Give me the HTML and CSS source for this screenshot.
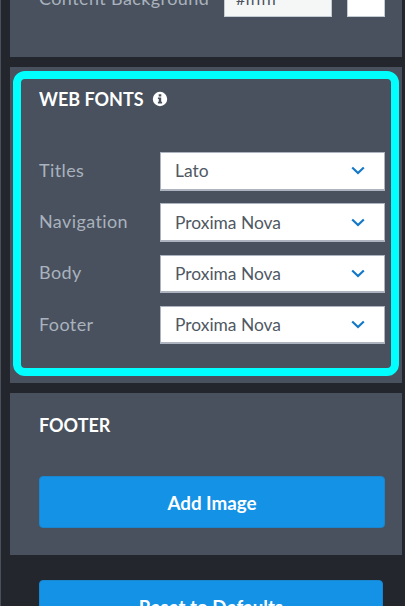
FILE: index.html
```html
<!DOCTYPE html>
<html lang="en">
<head>
    <meta charset="UTF-8">
    <meta name="viewport" content="width=device-width, initial-scale=1.0">
    <title>Theme Settings</title>
    <link rel="stylesheet" href="styles.css">
</head>
<body>
    <div class="sidebar">
        <!-- Colors section, scrolled mostly out of view -->
        <section class="panel panel-colors">
            <div class="color-row">
                <span class="field-label">Content Background</span>
                <input class="hex-input" type="text" value="#ffffff">
                <span class="swatch"></span>
            </div>
        </section>

        <!-- Web fonts section -->
        <section class="panel panel-fonts">
            <div class="highlight">
                <h2 class="panel-title">WEB FONTS
                    <svg class="info-icon" viewBox="0 0 16 16" aria-hidden="true">
                        <path fill-rule="evenodd" d="M8 .8a7.2 7.2 0 1 1 0 14.4A7.2 7.2 0 0 1 8 .8zM6.7 3.2v2.3h2.6V3.2zM5.9 6.5v1.6h.9v2.7h-.9v1.7h4.2v-1.7h-.9V6.5z"/>
                    </svg>
                </h2>
                <div class="font-row">
                    <span class="field-label">Titles</span>
                    <div class="select-box">Lato
                        <svg class="chevron" viewBox="0 0 14 9" aria-hidden="true"><path d="M1.2 1.5 7 7l5.8-5.5"/></svg>
                    </div>
                </div>
                <div class="font-row">
                    <span class="field-label">Navigation</span>
                    <div class="select-box">Proxima Nova
                        <svg class="chevron" viewBox="0 0 14 9" aria-hidden="true"><path d="M1.2 1.5 7 7l5.8-5.5"/></svg>
                    </div>
                </div>
                <div class="font-row">
                    <span class="field-label">Body</span>
                    <div class="select-box">Proxima Nova
                        <svg class="chevron" viewBox="0 0 14 9" aria-hidden="true"><path d="M1.2 1.5 7 7l5.8-5.5"/></svg>
                    </div>
                </div>
                <div class="font-row">
                    <span class="field-label">Footer</span>
                    <div class="select-box">Proxima Nova
                        <svg class="chevron" viewBox="0 0 14 9" aria-hidden="true"><path d="M1.2 1.5 7 7l5.8-5.5"/></svg>
                    </div>
                </div>
            </div>
        </section>

        <!-- Footer section -->
        <section class="panel panel-footer">
            <h2 class="panel-title">FOOTER</h2>
            <button class="blue-button">Add Image</button>
        </section>

        <div class="reset-area">
            <button class="blue-button">Reset to Defaults</button>
        </div>
    </div>
</body>
</html>
```

FILE: styles.css
```css
html, body {
    margin: 0;
    height: 606px;
    overflow: hidden;
    background-color: #24262e;
}

body {
    font-family: Lato, "Open Sans", Arial, sans-serif;
    border-left: 1px solid #4a4f59;
}

.sidebar {
    padding: 0 3px 0 9px;
}

.panel {
    background-color: #48515d;
    margin-bottom: 10px;
}

/* Top of this panel is scrolled off the screen */
.panel-colors {
    margin-top: -21px;
    padding: 0 17px 0 29px;
    height: 78px;
    box-sizing: border-box;
}

.color-row {
    display: flex;
    align-items: center;
}

.field-label {
    color: #aab2bd;
    font-size: 18px;
    letter-spacing: 0.4px;
}

.font-row .field-label {
    margin-bottom: 3px;
}

.hex-input {
    width: 108px;
    height: 38px;
    box-sizing: border-box;
    margin-left: auto;
    padding: 0 10px 0 11px;
    border: 1px solid #c5cbd3;
    background-color: #f5f7f7;
    color: #48515d;
    font-family: inherit;
    font-size: 16px;
}

.swatch {
    width: 38px;
    height: 38px;
    box-sizing: border-box;
    margin-left: 15px;
    border: 1px solid #c5cbd3;
    background-color: #fff;
}

.panel-fonts {
    height: 316px;
    padding: 4px 3px 0;
    box-sizing: border-box;
}

.highlight {
    height: 305px;
    box-sizing: border-box;
    padding: 8px 6px 0 18px;
    border: 8px solid #00ffff;
    border-radius: 12px;
}

.panel-title {
    display: flex;
    align-items: center;
    margin: 0;
    color: #fff;
    font-size: 18px;
    font-weight: 700;
    line-height: 24px;
}

.info-icon {
    width: 16px;
    height: 16px;
    margin-left: 8px;
    fill: #fff;
}

.panel-fonts .panel-title {
    margin-bottom: 41px;
}

.font-row {
    display: flex;
    align-items: center;
    justify-content: space-between;
    margin-bottom: 12.8px;
}

.select-box {
    display: flex;
    align-items: center;
    justify-content: space-between;
    width: 225px;
    height: 38.5px;
    box-sizing: border-box;
    padding: 0 19px 0 14px;
    border: 1px solid #aeb4bf;
    border-bottom-width: 2px;
    background-color: #fff;
    color: #4f5863;
    font-size: 17.4px;
}

.chevron {
    width: 14px;
    height: 9px;
    fill: none;
    stroke: #1478c8;
    stroke-width: 2.2;
}

.panel-footer {
    height: 162px;
    box-sizing: border-box;
    padding: 20px 17px 0 29px;
}

.panel-footer .blue-button {
    margin-top: 39px;
}

.blue-button {
    display: block;
    width: 100%;
    height: 52px;
    padding: 0;
    border: 1px solid #1a86d0;
    border-radius: 4px;
    background-color: #1492e6;
    color: #fff;
    font-family: inherit;
    font-size: 18.8px;
    font-weight: 700;
}

.reset-area {
    padding: 15px 19px 0 29px;
}
```
